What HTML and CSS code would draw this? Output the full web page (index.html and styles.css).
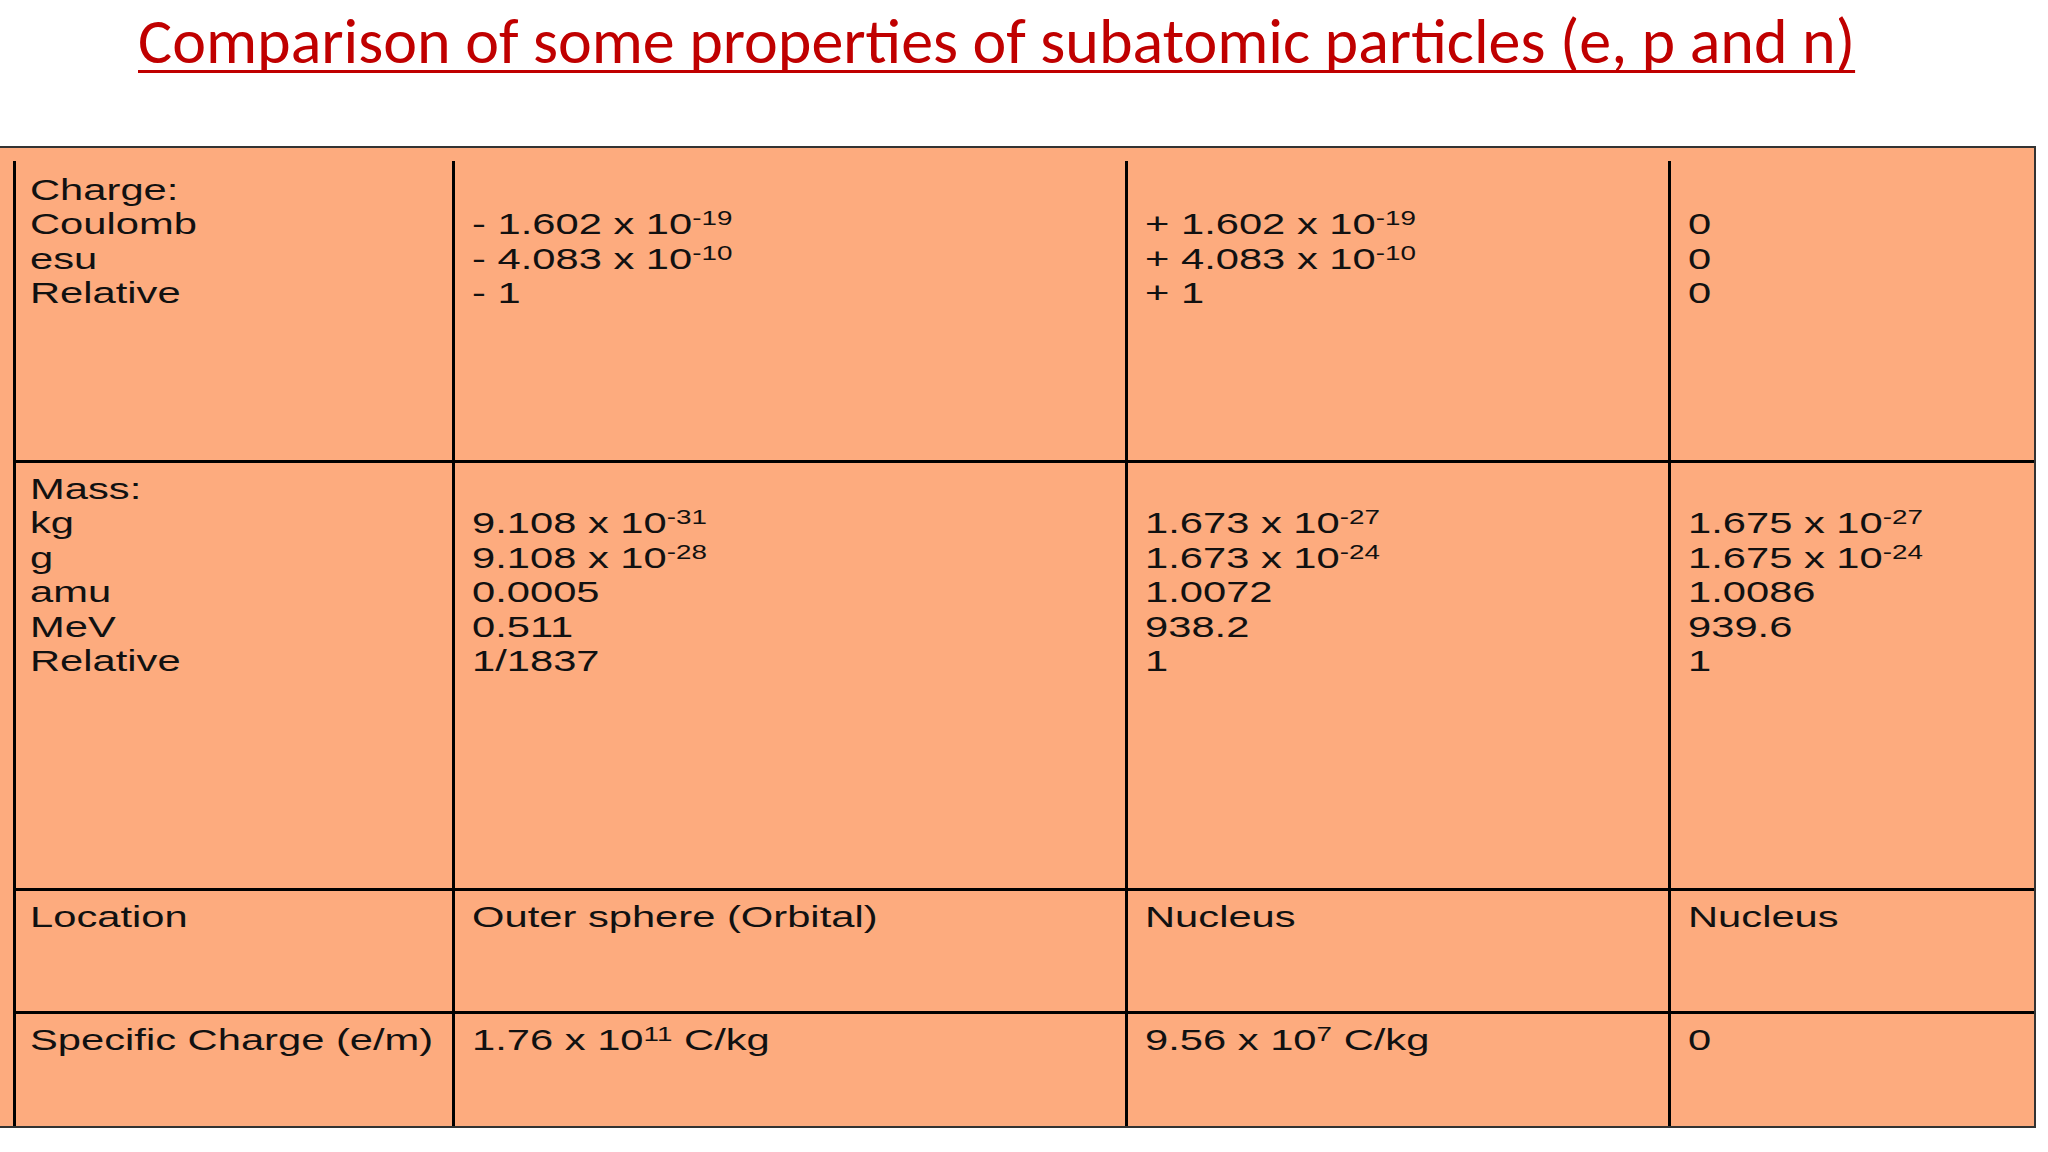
FILE: index.html
```html
<!DOCTYPE html>
<html lang="en">
<head>
<meta charset="utf-8">
<title>Comparison of some properties of subatomic particles</title>
<link rel="stylesheet" href="styles.css">
</head>
<body>
<header class="title-bar">
  <h1 class="title">Comparison of some properties of subatomic particles (e, p and n)</h1>
</header>
<section class="frame">
  <div class="table">
    <div class="cell c1 r1"><div class="txt">Charge:<br>Coulomb<br>esu<br>Relative</div></div>
    <div class="cell cv r1"><div class="txt">&nbsp;<br>- 1.602 x 10<sup>-19</sup><br>- 4.083 x 10<sup>-10</sup><br>- 1</div></div>
    <div class="cell cv r1"><div class="txt">&nbsp;<br>+ 1.602 x 10<sup>-19</sup><br>+ 4.083 x 10<sup>-10</sup><br>+ 1</div></div>
    <div class="cell cv r1"><div class="txt">&nbsp;<br>0<br>0<br>0</div></div>

    <div class="cell c1 rn"><div class="txt">Mass:<br>kg<br>g<br>amu<br>MeV<br>Relative</div></div>
    <div class="cell cv rn"><div class="txt">&nbsp;<br>9.108 x 10<sup>-31</sup><br>9.108 x 10<sup>-28</sup><br>0.0005<br>0.511<br>1/1837</div></div>
    <div class="cell cv rn"><div class="txt">&nbsp;<br>1.673 x 10<sup>-27</sup><br>1.673 x 10<sup>-24</sup><br>1.0072<br>938.2<br>1</div></div>
    <div class="cell cv rn"><div class="txt">&nbsp;<br>1.675 x 10<sup>-27</sup><br>1.675 x 10<sup>-24</sup><br>1.0086<br>939.6<br>1</div></div>

    <div class="cell c1 rn"><div class="txt">Location</div></div>
    <div class="cell cv rn"><div class="txt">Outer sphere (Orbital)</div></div>
    <div class="cell cv rn"><div class="txt">Nucleus</div></div>
    <div class="cell cv rn"><div class="txt">Nucleus</div></div>

    <div class="cell c1 rn last"><div class="txt">Specific Charge (e/m)</div></div>
    <div class="cell cv rn last"><div class="txt">1.76 x 10<sup>11</sup> C/kg</div></div>
    <div class="cell cv rn last"><div class="txt">9.56 x 10<sup>7</sup> C/kg</div></div>
    <div class="cell cv rn last"><div class="txt">0</div></div>
  </div>
</section>
</body>
</html>
```
FILE: styles.css
```css
html, body {
  margin: 0;
  padding: 0;
  background: #ffffff;
}

.title-bar {
  height: 146px;
  box-sizing: border-box;
  padding: 3px 0 0 138px;
}

.title {
  margin: 0;
  font-family: Carlito, Calibri, Lato, "Open Sans", sans-serif;
  font-weight: normal;
  font-size: 64px;
  line-height: 1.2;
  color: #c00000;
  white-space: nowrap;
  text-decoration: underline;
  text-decoration-thickness: 3px;
  text-underline-offset: 7px;
  text-decoration-skip-ink: none;
}

.frame {
  width: 2036px;
  height: 982px;
  box-sizing: border-box;
  background: #fdab7e;
  border-top: 2px solid #333333;
  border-right: 2px solid #333333;
  border-bottom: 2px solid #333333;
  padding: 13px 0 0 13px;
}

.table {
  display: grid;
  grid-template-columns: 439px 673px 543px 366px;
  grid-template-rows: 302px 428px 123px 112px;
}

.cell {
  box-sizing: border-box;
  border-left: 3px solid #000000;
  border-bottom: 3px solid #000000;
  font-family: "Liberation Sans", Arial, sans-serif;
  font-size: 30px;
  line-height: 34.4px;
  color: #111111;
  white-space: nowrap;
}

.cell.last {
  border-bottom: none;
}

.c1 {
  padding-left: 14px;
}

.cv {
  padding-left: 17px;
}

.r1 {
  padding-top: 12px;
}

.rn {
  padding-top: 9px;
}

.txt {
  display: inline-block;
  transform: scaleX(1.39);
  transform-origin: 0 0;
}

.txt sup {
  font-size: 20px;
  line-height: 0;
  vertical-align: 9px;
}
```
